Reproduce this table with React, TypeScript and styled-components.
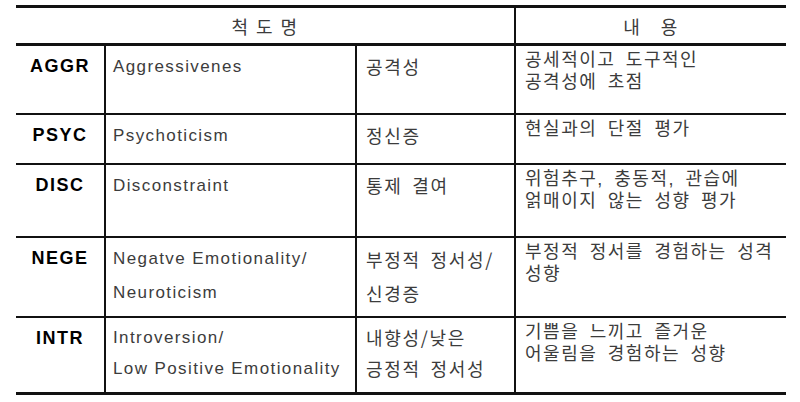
import type { FC } from 'react'
import styled, { createGlobalStyle } from 'styled-components'

/**
 * 척도 데이터
 */
interface Scale {
  code: string
  en: string[]
  ko: string[]
  desc: string[]
  h: number
  lh: number
}

const SCALES: Scale[] = [
  { code: 'AGGR', en: ['Aggressivenes'], ko: ['공격성'], desc: ['공세적이고 도구적인', '공격성에 초점'], h: 69, lh: 33 },
  { code: 'PSYC', en: ['Psychoticism'], ko: ['정신증'], desc: ['현실과의 단절 평가'], h: 50, lh: 33 },
  { code: 'DISC', en: ['Disconstraint'], ko: ['통제 결여'], desc: ['위험추구, 충동적, 관습에', '얽매이지 않는 성향 평가'], h: 73, lh: 33 },
  {
    code: 'NEGE',
    en: ['Negatve Emotionality/', 'Neuroticism'],
    ko: ['부정적 정서성/', '신경증'],
    desc: ['부정적 정서를 경험하는 성격', '성향'],
    h: 80,
    lh: 34,
  },
  {
    code: 'INTR',
    en: ['Introversion/', 'Low Positive Emotionality'],
    ko: ['내향성/낮은', '긍정적 정서성'],
    desc: ['기쁨을 느끼고 즐거운', '어울림을 경험하는 성향'],
    h: 77,
    lh: 31,
  },
]

const KO_FONT = `'Noto Sans CJK KR', 'Liberation Sans', sans-serif`

const GlobalStyle = createGlobalStyle`
  html, body {
    margin: 0;
    background: #fff;
  }
  body {
    font-family: 'Liberation Sans', 'Noto Sans CJK KR', sans-serif;
  }
`

const Page = styled.div`
  padding: 5px 14px 0 16px;
`

const Table = styled.table`
  width: 770px;
  table-layout: fixed;
  border-collapse: separate;
  border-spacing: 0;
  border-top: 3px solid #111;
`

const HeadRow = styled.tr`
  height: 38px;
`

const HeadCell = styled.th<{ $divider?: boolean }>`
  padding: 0;
  border-bottom: 3px solid #111;
  border-left: ${(p) => (p.$divider ? '2px solid #111' : 'none')};
  font-family: ${KO_FONT};
  font-weight: 400;
  font-size: 18px;
  line-height: 26px;
  letter-spacing: 1.5px;
  word-spacing: 1px;
  white-space: pre;
  color: #3c3c3c;
  text-align: center;
  vertical-align: middle;
`

const Row = styled.tr<{ $h: number; $last?: boolean }>`
  height: ${(p) => p.$h}px;

  > td {
    border-bottom: ${(p) => (p.$last ? '3px' : '2px')} solid #111;
    vertical-align: top;
  }
`

const CodeCell = styled.td`
  padding: 4px 0 0;
  text-align: center;
  font-weight: 700;
  font-size: 18px;
  line-height: 33px;
  letter-spacing: 1.5px;
  color: #000;
`

const NameCell = styled.td<{ $lh: number }>`
  border-left: 2px solid #111;
  padding: 4px 4px 0 7px;
  font-size: 17px;
  line-height: ${(p) => p.$lh}px;
  letter-spacing: 1.4px;
  color: #3c3c3c;
  white-space: nowrap;
`

const KoNameCell = styled(NameCell)`
  padding-left: 9px;
  font-family: ${KO_FONT};
  font-size: 18px;
  letter-spacing: 1.7px;
  word-spacing: 4px;
`

/* Latin face first so the tight 22px lines keep their own box height */
const DescCell = styled.td`
  border-left: 2px solid #111;
  padding: 3px 4px 0 9px;
  font-family: 'Liberation Sans', 'Noto Sans CJK KR', sans-serif;
  font-size: 18px;
  line-height: 22px;
  letter-spacing: 1.5px;
  word-spacing: 4px;
  color: #3c3c3c;
  white-space: nowrap;
`

const Line = styled.div``

const Lines: FC<{ items: string[] }> = ({ items }) => (
  <>
    {items.map((t) => (
      <Line key={t}>{t}</Line>
    ))}
  </>
)

export default function App() {
  return (
    <Page>
      <GlobalStyle />
      <Table>
        <colgroup>
          <col style={{ width: 88 }} />
          <col style={{ width: 251 }} />
          <col style={{ width: 159 }} />
          <col style={{ width: 272 }} />
        </colgroup>
        <thead>
          <HeadRow>
            <HeadCell colSpan={3}>척 도 명</HeadCell>
            <HeadCell $divider>{'내   용'}</HeadCell>
          </HeadRow>
        </thead>
        <tbody>
          {SCALES.map((s, i) => (
            <Row key={s.code} $h={s.h} $last={i === SCALES.length - 1}>
              <CodeCell>{s.code}</CodeCell>
              <NameCell $lh={s.lh}>
                <Lines items={s.en} />
              </NameCell>
              <KoNameCell $lh={s.lh}>
                <Lines items={s.ko} />
              </KoNameCell>
              <DescCell>
                <Lines items={s.desc} />
              </DescCell>
            </Row>
          ))}
        </tbody>
      </Table>
    </Page>
  )
}
